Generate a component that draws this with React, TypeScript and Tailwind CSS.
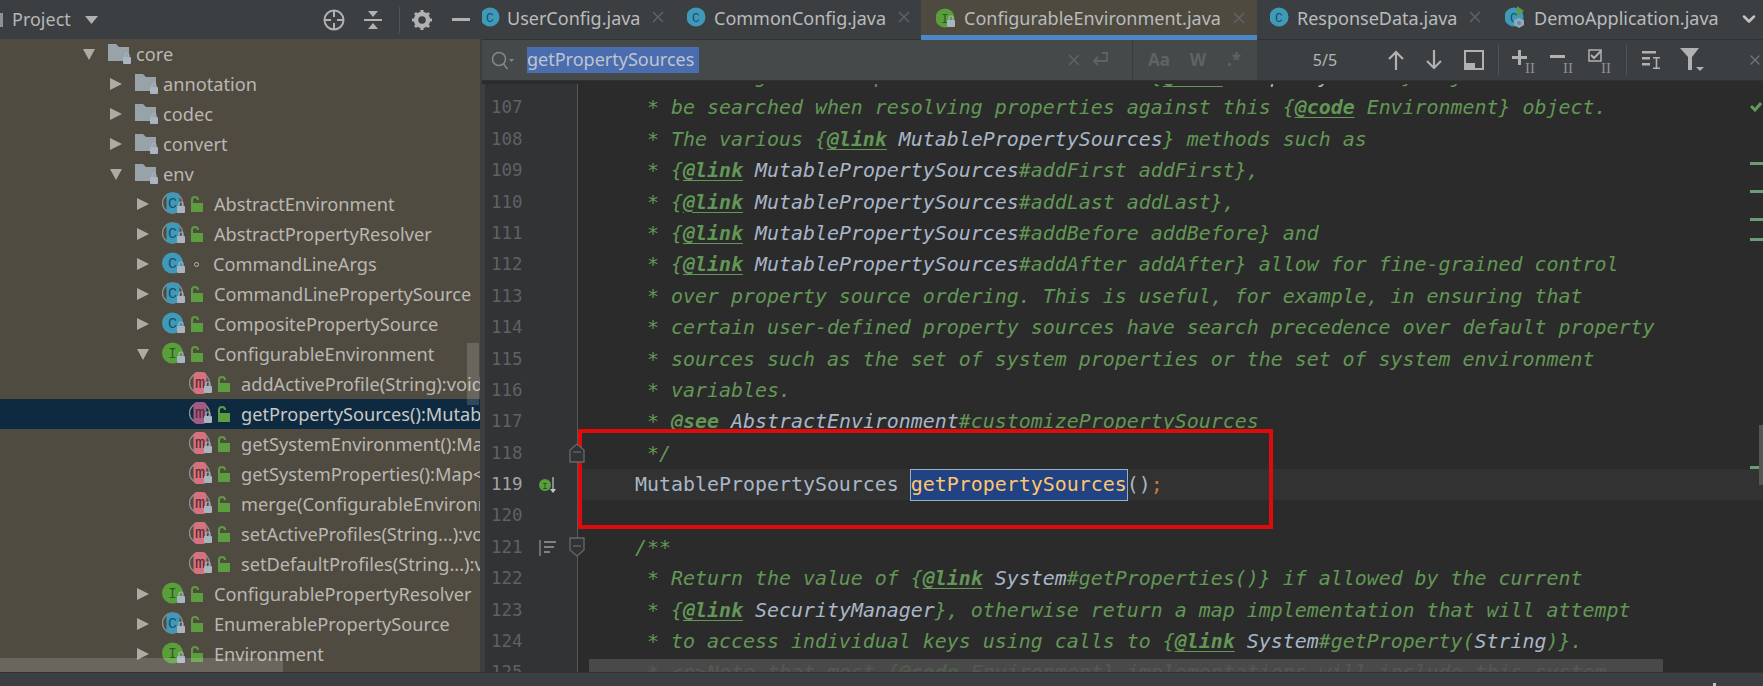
import React from "react";
import { ChevronDown, X } from "lucide-react";

const ui = "font-['Noto_Sans','Open_Sans',sans-serif]";

function Arrow({ open }: { open?: boolean }) {
  return (
    <svg width="14" height="14" viewBox="0 0 14 14" className="shrink-0">
      {open ? <path d="M1 2h12L7 13z" fill="#aeaba6" /> : <path d="M1 1l12 6-12 6z" fill="#aeaba6" />}
    </svg>
  );
}

function Folder() {
  return (
    <svg width="23" height="24" viewBox="0 0 23 24" className="shrink-0">
      <path d="M0 2h8l3 3h10v14H0z" fill="#97a2a9" />
      <rect x="15" y="15" width="8" height="7" rx="1" fill="#a9b6c2" />
      <path d="M17 15v-2a2 2 0 0 1 4 0v2" stroke="#a9b6c2" strokeWidth="1" fill="none" />
    </svg>
  );
}

function SmallLock({ x = 15, y = 15 }: { x?: number; y?: number }) {
  return (
    <g>
      <rect x={x} y={y + 3} width="8" height="7" rx="1" fill="#a9b6c2" />
      <path d={`M${x + 2} ${y + 3}v-2a2 2 0 0 1 4 0v2`} stroke="#a9b6c2" strokeWidth="1.2" fill="none" />
    </g>
  );
}

type Kind = "c" | "ac" | "i" | "m" | "ms";

function Glyph({ kind }: { kind: Kind }) {
  const t = "font-['Liberation_Mono',monospace]";
  return (
    <svg width="24" height="26" viewBox="0 0 24 26" className="shrink-0">
      {kind === "c" && (
        <>
          <circle cx="10.5" cy="12" r="10.5" fill="#3f9ab9" />
          <text x="10.5" y="17" textAnchor="middle" fontSize="15" fill="#19506a" className={t}>C</text>
        </>
      )}
      {kind === "ac" && (
        <>
          <circle cx="10.5" cy="12" r="10" fill="none" stroke="#8a8f90" strokeWidth="1.4" />
          <rect x="4.5" y="2" width="13" height="20" rx="3" fill="#3f9ab9" />
          <text x="10.5" y="17" textAnchor="middle" fontSize="15" fill="#19506a" className={t}>C</text>
        </>
      )}
      {kind === "i" && (
        <>
          <circle cx="10.5" cy="12" r="10.5" fill="#5a9e3b" />
          <text x="10.5" y="17" textAnchor="middle" fontSize="14" fill="#2c5a20" className={t}>I</text>
        </>
      )}
      {(kind === "m" || kind === "ms") && (
        <>
          <circle cx="10.5" cy="12" r="10" fill="none" stroke="#8a8f90" strokeWidth="1.4" />
          <rect x="4.5" y="1" width="13" height="22" rx="4" fill={kind === "m" ? "#d6727f" : "#a25a86"} />
          <text x="11" y="17" textAnchor="middle" fontSize="17" fill="#5a2a30" className={t}>m</text>
        </>
      )}
      <SmallLock x={15} y={12} />
    </svg>
  );
}

function GreenLock() {
  return (
    <svg width="14" height="16" viewBox="0 0 14 16" className="shrink-0">
      <rect x="2" y="7" width="12" height="9" fill="#5b9d3f" />
      <path d="M3 7V4a3 3 0 0 1 6 0" stroke="#5b9d3f" strokeWidth="2" fill="none" />
    </svg>
  );
}

function TreeRow({
  pad,
  arrow,
  icon,
  lock = true,
  dot,
  text,
  sel,
  gap = "ml-[11px]",
}: {
  pad: string;
  arrow?: "o" | "c";
  icon: Kind | "f";
  lock?: boolean;
  dot?: boolean;
  text: string;
  sel?: boolean;
  gap?: string;
}) {
  return (
    <div className={`flex items-center h-[30px] whitespace-nowrap ${pad} ${sel ? "bg-[#0d2a40] text-[#c8c8c8]" : ""}`}>
      <span className="w-[26px] shrink-0 flex">{arrow ? <Arrow open={arrow === "o"} /> : null}</span>
      {icon === "f" ? <Folder /> : <Glyph kind={icon} />}
      {icon !== "f" && lock && <span className="ml-[3px]"><GreenLock /></span>}
      {icon !== "f" && dot && (
        <span className="ml-[8px] mr-[3px] w-[5px] h-[5px] rounded-full border border-[#b5b5b5] shrink-0" />
      )}
      <span className={`pt-[2px] ${icon === "f" ? "ml-[5px]" : gap}`}>{text}</span>
    </div>
  );
}

function Tree() {
  const a = "pl-[82px]";
  const b = "pl-[109px]";
  const c = "pl-[136px]";
  const d = "pl-[163px]";
  return (
    <div className="relative flex-1 bg-[#504b41] text-[#b9b7b2] text-[18.2px] overflow-hidden">
      <TreeRow pad={a} arrow="o" icon="f" text="core" />
      <TreeRow pad={b} arrow="c" icon="f" text="annotation" />
      <TreeRow pad={b} arrow="c" icon="f" text="codec" />
      <TreeRow pad={b} arrow="c" icon="f" text="convert" />
      <TreeRow pad={b} arrow="o" icon="f" text="env" />
      <TreeRow pad={c} arrow="c" icon="ac" text="AbstractEnvironment" />
      <TreeRow pad={c} arrow="c" icon="ac" text="AbstractPropertyResolver" />
      <TreeRow pad={c} arrow="c" icon="c" lock={false} dot text="CommandLineArgs" />
      <TreeRow pad={c} arrow="c" icon="ac" text="CommandLinePropertySource" />
      <TreeRow pad={c} arrow="c" icon="c" text="CompositePropertySource" />
      <TreeRow pad={c} arrow="o" icon="i" text="ConfigurableEnvironment" />
      <TreeRow pad={d} icon="m" text="addActiveProfile(String):void" />
      <TreeRow pad={d} icon="ms" text="getPropertySources():MutablePropertySources" sel />
      <TreeRow pad={d} icon="m" text="getSystemEnvironment():Map<String, Object>" />
      <TreeRow pad={d} icon="m" text="getSystemProperties():Map<String, Object>" />
      <TreeRow pad={d} icon="m" text="merge(ConfigurableEnvironment):void" />
      <TreeRow pad={d} icon="m" text="setActiveProfiles(String...):void" />
      <TreeRow pad={d} icon="m" text="setDefaultProfiles(String...):void" />
      <TreeRow pad={c} arrow="c" icon="i" text="ConfigurablePropertyResolver" />
      <TreeRow pad={c} arrow="c" icon="ac" text="EnumerablePropertySource" />
      <TreeRow pad={c} arrow="c" icon="i" text="Environment" />
      {/* overlay scrollbars */}
      <div className="absolute right-[1px] top-[304px] w-[12px] h-[62px] bg-white/15" />
      <div className="absolute left-0 bottom-0 w-[283px] h-[14px] bg-white/15" />
    </div>
  );
}

function LeftHeader() {
  return (
    <div className="flex items-center h-[39px] bg-[#3c3f41] text-[#b4b6b8] text-[18px] shrink-0">
      <span className="w-[3px] h-[14px] bg-[#8d9194] mr-[9px]" />
      <span>Project</span>
      <svg width="13" height="8" viewBox="0 0 13 8" className="ml-[14px]"><path d="M0 0h13L6.500 8z" fill="#afb1b3" /></svg>
      <div className="ml-auto flex items-center">
        <span className="w-[40px] flex justify-center">
          <svg width="22" height="22" viewBox="0 0 22 22" fill="none" stroke="#afb1b3" strokeWidth="2">
            <circle cx="11" cy="11" r="9.500" />
            <path d="M11 2v6M11 14v6M2 11h6M14 11h6" />
          </svg>
        </span>
        <span className="w-[38px] mr-[4px] flex justify-center">
          <svg width="20" height="20" viewBox="0 0 20 20" fill="#afb1b3">
            <rect x="1" y="9" width="18" height="2" />
            <path d="M5 1h10l-5 6zM5 19h10l-5-6z" />
          </svg>
        </span>
        <span className="w-[6px] flex justify-center"><span className="w-px h-[26px] bg-[#515556]" /></span>
        <span className="w-[40px] flex justify-center">
          <svg width="20" height="20" viewBox="0 0 20 20">
            <circle cx="10" cy="10" r="6" fill="none" stroke="#afb1b3" strokeWidth="4.500" />
            <path d="M10 0v20M0 10h20M3 3l14 14M17 3L3 17" stroke="#afb1b3" strokeWidth="3" strokeDasharray="3.500 13 3.500 0" />
          </svg>
        </span>
        <span className="w-[38px] flex justify-center"><span className="w-[18px] h-[3px] bg-[#afb1b3]" /></span>
      </div>
    </div>
  );
}

function TabIcon({ kind }: { kind: "c" | "i" | "s" }) {
  const mono = "font-['Liberation_Mono',monospace]";
  return (
    <svg width="20" height="22" viewBox="0 0 20 22" className="shrink-0">
      {kind === "i" ? (
        <>
          <circle cx="9" cy="11" r="9.500" fill="#5a9e3b" />
          <text x="9" y="15.500" textAnchor="middle" fontSize="13" fill="#2c5a20" className={mono}>I</text>
          <SmallLock x={11} y={10} />
        </>
      ) : (
        <>
          <circle cx="9" cy="11" r="9.500" fill="#3f9ab9" />
          <text x="9" y="15.500" textAnchor="middle" fontSize="13" fill="#19506a" className={mono}>C</text>
          {kind === "s" && (
            <>
              <path d="M12 0l7 5-7 5z" fill="#5b9d3f" />
              <path d="M14 12l5 2v5l-5 3-5-3v-5z" fill="#9aa7b0" />
              <circle cx="14" cy="17" r="2" fill="#3f9ab9" />
            </>
          )}
        </>
      )}
    </svg>
  );
}

function TabClose() {
  return (
    <svg width="12" height="12" viewBox="0 0 12 12" className="shrink-0" stroke="#5f6366" strokeWidth="1.500">
      <path d="M1 1l10 10M11 1L1 11" />
    </svg>
  );
}

function Tab({
  w,
  pad,
  icon,
  name,
  gap,
  active,
  close = true,
}: {
  w: string;
  pad: string;
  icon: "c" | "i" | "s";
  name: string;
  gap: string;
  active?: boolean;
  close?: boolean;
}) {
  return (
    <div
      className={`flex items-center h-[40px] shrink-0 ${w} ${pad} ${
        active ? "bg-[#4e4a3f] border-b-[5px] border-[#4a88c7]" : "pb-[5px] border-b border-[#323232]"
      }`}
    >
      <TabIcon kind={icon} />
      <span className={`pt-[2px] ${gap}`}>{name}</span>
      {close && (
        <span className="ml-[12px]">
          <TabClose />
        </span>
      )}
    </div>
  );
}

function Tabs() {
  return (
    <div className="flex h-[40px] bg-[#3c3f41] text-[#b9bbbd] text-[18px] shrink-0 overflow-hidden">
      <Tab w="w-[206px]" pad="-ml-[1px]" icon="c" name="UserConfig.java" gap="ml-[6px]" />
      <Tab w="w-[234px]" pad="" icon="c" name="CommonConfig.java" gap="ml-[7px]" />
      <Tab w="w-[336px]" pad="pl-[15px]" icon="i" name="ConfigurableEnvironment.java" gap="ml-[8px]" active />
      <Tab w="w-[248px]" pad="pl-[13px]" icon="c" name="ResponseData.java" gap="ml-[7px]" />
      <Tab w="w-[234px]" pad="" icon="s" name="DemoApplication.java" gap="ml-[9px]" close={false} />
      <div className="w-[24px] shrink-0 h-[40px] flex items-start justify-start pt-[9px] border-b border-[#323232]">
        <ChevronDown size={20} strokeWidth={3} color="#c0c2c4" className="shrink-0" />
      </div>
    </div>
  );
}

const II = () => (
  <text x="13" y="27" fontSize="15" fill="#8f9295" stroke="none" className="font-['Liberation_Serif',serif]">II</text>
);

function SearchBar() {
  const cell = "flex justify-center items-center shrink-0";
  const ic = "#afb1b3";
  return (
    <div className="flex h-[41px] shrink-0 text-[18px] border-b border-[#323232]">
      <div className="flex items-center w-[775px] bg-[#45494a] text-[#bbbbbb]">
        <svg width="24" height="20" viewBox="0 0 24 20" fill="none" stroke="#85888a" strokeWidth="1.500" className="ml-[8px]">
          <circle cx="9" cy="9" r="6.500" />
          <path d="M13.500 14l4 5" />
          <path d="M19 9h5l-2.500 3z" fill="#85888a" stroke="none" />
        </svg>
        <span className="ml-[13px] bg-[#4a6db0] h-[26px] leading-[24px] w-[172px] text-[#c0c4cc] whitespace-nowrap overflow-hidden">getPropertySources</span>
        <span className="ml-auto flex items-center">
          <svg width="12" height="12" viewBox="0 0 12 12" stroke="#5f6366" strokeWidth="1.500"><path d="M1 1l10 10M11 1L1 11" /></svg>
          <svg width="20" height="18" viewBox="0 0 20 18" fill="none" stroke="#5f6366" strokeWidth="1.800" className="ml-[10px]">
            <path d="M12 2h5v8H4M8 6l-4 4 4 4" />
          </svg>
          <span className="w-px h-[40px] bg-[#393b3d] ml-[22px]" />
          <span className="w-[52px] text-center font-bold text-[#5f6366] text-[17px]">Aa</span>
          <span className="w-[26px] text-center font-bold text-[#5f6366] text-[17px]">W</span>
          <span className="w-[46px] text-center font-bold text-[#5f6366] text-[17px]">.*</span>
        </span>
      </div>
      <div className="flex items-center flex-1 bg-[#3c3f41] text-[#b4b6b8]">
        <span className="w-[43px] shrink-0" />
        <span className={`w-[50px] ${cell} text-[16px]`}>5/5</span>
        <span className="w-[27px] shrink-0" />
        <span className={`w-[38px] ${cell}`}>
          <svg width="18" height="20" viewBox="0 0 18 20" fill="none" stroke={ic} strokeWidth="2.200"><path d="M9 20V2M2 9l7-7 7 7" /></svg>
        </span>
        <span className={`w-[38px] ${cell}`}>
          <svg width="18" height="20" viewBox="0 0 18 20" fill="none" stroke={ic} strokeWidth="2.200"><path d="M9 0v18M2 11l7 7 7-7" /></svg>
        </span>
        <span className={`w-[42px] ${cell}`}>
          <svg width="20" height="20" viewBox="0 0 20 20">
            <rect x="1" y="1" width="18" height="18" fill="none" stroke={ic} strokeWidth="2" />
            <rect x="1" y="13" width="10" height="6" fill={ic} />
          </svg>
        </span>
        <span className={`w-[6px] ${cell}`}><span className="w-px h-[30px] bg-[#515556]" /></span>
        <span className="w-[7px] shrink-0" />
        <span className={`w-[38px] ${cell}`}>
          <svg width="30" height="28" viewBox="0 0 30 28" fill={ic}>
            <path d="M6 4h3v6h6v3H9v6H6v-6H0v-3h6z" /><II />
          </svg>
        </span>
        <span className={`w-[38px] ${cell}`}>
          <svg width="30" height="28" viewBox="0 0 30 28" fill={ic}>
            <rect x="0" y="9" width="15" height="3" /><II />
          </svg>
        </span>
        <span className={`w-[38px] ${cell}`}>
          <svg width="30" height="28" viewBox="0 0 30 28" fill="none" stroke={ic} strokeWidth="1.500">
            <rect x="1" y="4" width="12" height="11" />
            <path d="M3 9l3 3 7-7" strokeWidth="2" /><II />
          </svg>
        </span>
        <span className={`w-[8px] ${cell}`}><span className="w-px h-[30px] bg-[#515556]" /></span>
        <span className={`w-[44px] ${cell}`}>
          <svg width="20" height="22" viewBox="0 0 20 22" fill={ic}>
            <rect x="0" y="2" width="14" height="2.500" /><rect x="0" y="8" width="8" height="2.500" /><rect x="0" y="14" width="8" height="2.500" />
            <path d="M11 8h7v1.500h-2.700v9H18V20h-7v-1.500h2.700v-9H11z" />
          </svg>
        </span>
        <span className={`w-[36px] ${cell}`}>
          <svg width="24" height="26" viewBox="0 0 24 26" fill={ic}>
            <path d="M0 1h19l-7 9v13H8V10z" /><path d="M16 20h8l-4 4z" />
          </svg>
        </span>
        <span className="w-[37px] shrink-0" />
        <span className={`w-[16px] ${cell}`}>
          <X size={16} strokeWidth={2} color="#6f7376" className="shrink-0" />
        </span>
      </div>
    </div>
  );
}

type Seg = [("c" | "t" | "r"), string];
const D = (...s: Seg[]) => s;
const LINES: { n: number; s: Seg[] }[] = [
  { n: 106, s: D(["c", "     * allowing for manipulation of the set of {"], ["t", "@link"], ["r", " PropertySource"], ["c", "} objects that should"]) },
  { n: 107, s: D(["c", "     * be searched when resolving properties against this {"], ["t", "@code"], ["c", " Environment} object."]) },
  { n: 108, s: D(["c", "     * The various {"], ["t", "@link"], ["r", " MutablePropertySources"], ["c", "} methods such as"]) },
  { n: 109, s: D(["c", "     * {"], ["t", "@link"], ["r", " MutablePropertySources"], ["c", "#addFirst addFirst},"]) },
  { n: 110, s: D(["c", "     * {"], ["t", "@link"], ["r", " MutablePropertySources"], ["c", "#addLast addLast},"]) },
  { n: 111, s: D(["c", "     * {"], ["t", "@link"], ["r", " MutablePropertySources"], ["c", "#addBefore addBefore} and"]) },
  { n: 112, s: D(["c", "     * {"], ["t", "@link"], ["r", " MutablePropertySources"], ["c", "#addAfter addAfter} allow for fine-grained control"]) },
  { n: 113, s: D(["c", "     * over property source ordering. This is useful, for example, in ensuring that"]) },
  { n: 114, s: D(["c", "     * certain user-defined property sources have search precedence over default property"]) },
  { n: 115, s: D(["c", "     * sources such as the set of system properties or the set of system environment"]) },
  { n: 116, s: D(["c", "     * variables."]) },
  { n: 117, s: D(["c", "     * "], ["t", "@see"], ["r", " AbstractEnvironment"], ["c", "#customizePropertySources"]) },
  { n: 118, s: D(["c", "     */"]) },
  { n: 119, s: [] },
  { n: 120, s: [] },
  { n: 121, s: D(["c", "    /**"]) },
  { n: 122, s: D(["c", "     * Return the value of {"], ["t", "@link"], ["r", " System"], ["c", "#getProperties()} if allowed by the current"]) },
  { n: 123, s: D(["c", "     * {"], ["t", "@link"], ["r", " SecurityManager"], ["c", "}, otherwise return a map implementation that will attempt"]) },
  { n: 124, s: D(["c", "     * to access individual keys using calls to {"], ["t", "@link"], ["r", " System"], ["c", "#getProperty("], ["r", "String"], ["c", ")}."]) },
  { n: 125, s: D(["c", "     * <p>Note that most {"], ["t", "@code"], ["c", " Environment} implementations will include this system"]) },
];

function Segment({ seg }: { seg: Seg }) {
  const [k, v] = seg;
  if (k === "t") return <span className="italic font-bold underline underline-offset-[3px] text-[#629755]">{v}</span>;
  if (k === "r") return <span className="italic text-[#a8b6c8]">{v}</span>;
  return <span className="italic text-[#629755]">{v}</span>;
}

function GutterMark({ n }: { n: number }) {
  if (n === 119) {
    return (
      <svg width="18" height="20" viewBox="0 0 18 20">
        <circle cx="6" cy="10" r="6" fill="#5a9e3b" />
        <text x="6" y="13.500" textAnchor="middle" fontSize="9" fill="#1f4a18" className="font-['Liberation_Mono',monospace]">I</text>
        <path d="M14 2v13" stroke="#c8c8c8" strokeWidth="1.200" />
        <path d="M11 14h6l-3 4z" fill="#c8c8c8" />
      </svg>
    );
  }
  if (n === 121) {
    return (
      <svg width="18" height="20" viewBox="0 0 18 20">
        <path d="M1 2v16" stroke="#7f8386" strokeWidth="1.500" />
        <path d="M5 4h12M5 9h10M5 14h6" stroke="#7f8386" strokeWidth="1.800" />
      </svg>
    );
  }
  return null;
}

function Fold({ n }: { n: number }) {
  if (n !== 118 && n !== 121) return null;
  return (
    <svg width="16" height="20" viewBox="0 0 16 20" className="absolute right-[-8px] top-[5px] z-10 bg-transparent">
      {n === 118 ? (
        <path d="M1 19V7l7-6 7 6v12z" fill="#313335" stroke="#65686a" strokeWidth="1.300" />
      ) : (
        <path d="M1 1v12l7 6 7-6V1z" fill="#313335" stroke="#65686a" strokeWidth="1.300" />
      )}
      <path d="M4 9h8" stroke="#65686a" strokeWidth="1.300" />
    </svg>
  );
}

function CodeRow({ n, s }: { n: number; s: Seg[] }) {
  const cur = n === 119;
  return (
    <div className="flex h-[31.4px] leading-[31.4px]">
      <div
        className={`relative flex items-center w-[96px] shrink-0 bg-[#313335] border-l-[3px] border-r border-l-[#3c3f41] border-r-[#57595b] pl-[6px] text-[17.5px] ${
          cur ? "text-[#a4a3a3]" : "text-[#5f6164]"
        }`}
      >
        <span className="w-[48px] shrink-0">{n}</span>
        <GutterMark n={n} />
        <Fold n={n} />
      </div>
      <div className={`flex-1 pl-[9px] whitespace-pre ${cur ? "bg-[#323232]" : ""}`}>
        {cur ? (
          <span className="text-[#a9b7c6]">
            {"    MutablePropertySources "}
            <span className="inline-block h-[30px] leading-[29px] align-top mt-[1px] bg-[#214283] outline outline-1 outline-[#9bb0bf] text-[#ffc66d]">getPropertySources</span>
            {"()"}
            <span className="text-[#cc7832]">;</span>
          </span>
        ) : (
          s.map((seg, i) => <Segment key={i} seg={seg} />)
        )}
      </div>
    </div>
  );
}

function Editor() {
  return (
    <div className="relative flex-1 overflow-hidden bg-[#2b2b2b] border-t-[3px] border-[#2b2b2b] text-[19.93px] font-['DejaVu_Sans_Mono',monospace]">
      <div className="-mt-[23px]">
        {LINES.map((l) => (
          <CodeRow key={l.n} n={l.n} s={l.s} />
        ))}
      </div>
      {/* red annotation box */}
      <div className="absolute left-[96px] top-[345px] w-[695px] h-[100px] border-[4px] border-[#df0b0b]" />
      {/* horizontal overlay scrollbar */}
      <div className="absolute left-[107px] bottom-0 w-[1074px] h-[13px] bg-[#4f4f4f]/85" />
      {/* error stripe marks */}
      <div className="absolute right-0 top-[78px] w-[13px] h-[3px] bg-[#6c9c76]" />
      <div className="absolute right-0 top-[106px] w-[13px] h-[3px] bg-[#6c9c76]" />
      <div className="absolute right-0 top-[134px] w-[13px] h-[3px] bg-[#6c9c76]" />
      <div className="absolute right-0 top-[154px] w-[13px] h-[3px] bg-[#6c9c76]" />
      <div className="absolute right-0 top-[382px] w-[13px] h-[3px] bg-[#6c9c76]" />
      <div className="absolute right-0 top-[341px] w-[4px] h-[60px] bg-[#555555]" />
      <svg width="12" height="10" viewBox="0 0 12 10" className="absolute right-[1px] top-[18px]" fill="none" stroke="#5e9c5a" strokeWidth="3">
        <path d="M1 4l4 4 6-7" />
      </svg>
    </div>
  );
}

export default function App() {
  return (
    <div className={`w-[1763px] h-[686px] overflow-hidden flex flex-col bg-[#3c3f41] ${ui}`}>
      <div className="flex flex-1 min-h-0">
        <div className="flex flex-col w-[480px] shrink-0">
          <LeftHeader />
          <Tree />
        </div>
        <div className="w-[2px] shrink-0 bg-[#3c3f41]" />
        <div className="flex flex-col flex-1 min-w-0">
          <Tabs />
          <SearchBar />
          <Editor />
        </div>
      </div>
      <div className="relative h-[14px] shrink-0 bg-[#3c3f41] border-t border-[#323232]">
        <span className="absolute left-[1713px] bottom-0 w-[3px] h-[3px] bg-[#c0c0c0]" />
      </div>
    </div>
  );
}
